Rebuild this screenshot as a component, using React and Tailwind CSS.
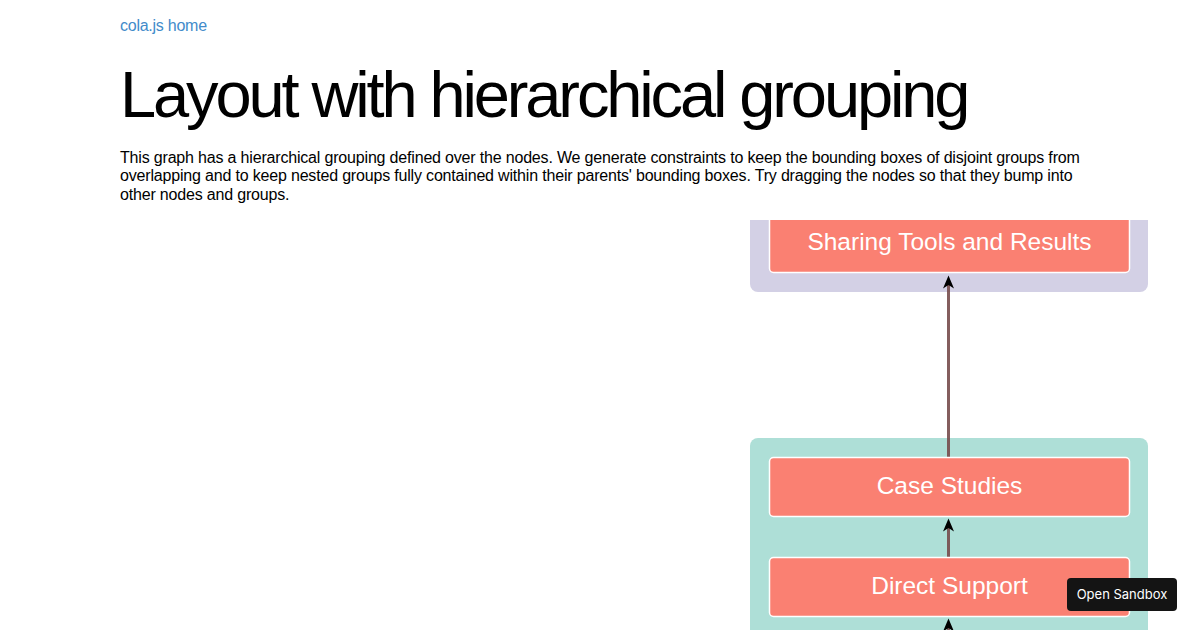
import React from 'react';

const font = { fontFamily: '"Liberation Sans", Arial, sans-serif' };

function Arrow({ x, y }) {
  // arrowhead pointing up, tip at (x, y)
  return <path d={`M${x} ${y} L${x + 5.5} ${y + 13} L${x} ${y + 9.5} L${x - 5.5} ${y + 13} Z`} fill="#000" />;
}

function Node({ x, y, w, h, label }) {
  return (
    <g>
      <rect x={x} y={y} width={w} height={h} rx={4} fill="#fa8072" stroke="#fff" strokeWidth={1.5} />
      <text x={x + w / 2} y={y + h / 2 + 7} textAnchor="middle" fill="#fff" fontSize={24.5} style={font}>
        {label}
      </text>
    </g>
  );
}

function Graph() {
  return (
    <svg width="1200" height="410" viewBox="0 220 1200 410" className="block">
      {/* groups */}
      <rect x={750} y={150} width={398} height={142} rx={8} fill="#d3d0e5" />
      <rect x={750} y={438} width={398} height={260} rx={8} fill="#aedfd7" />

      {/* edges */}
      <line x1={948.5} y1={282} x2={948.5} y2={458} stroke="#774d4d" strokeOpacity={0.9} strokeWidth={3} />
      <line x1={948.5} y1={524} x2={948.5} y2={558} stroke="#774d4d" strokeOpacity={0.9} strokeWidth={3} />
      <line x1={948.5} y1={624} x2={948.5} y2={660} stroke="#774d4d" strokeOpacity={0.9} strokeWidth={3} />

      {/* nodes */}
      <Node x={769.5} y={213} w={360} h={59.5} label="Sharing Tools and Results" />
      <Node x={769.5} y={457.5} w={360} h={59} label="Case Studies" />
      <Node x={769.5} y={557.5} w={360} h={59} label="Direct Support" />

      <Arrow x={948.5} y={275.5} />
      <Arrow x={948.5} y={518.5} />
      <Arrow x={948.5} y={618.5} />
    </svg>
  );
}

export default function App() {
  return (
    <div className="relative w-[1200px] h-[630px] overflow-hidden bg-white text-black" style={font}>
      <div className="w-[960px] mx-auto pt-[14px]">
        <div className="leading-[24px]">
          <a href="#" className="text-[16px] tracking-[-0.25px] text-[#428bca]">cola.js home</a>
        </div>
        <h1 className="mt-[21px] text-[65px] leading-[72px] tracking-[-0.048em] font-normal">
          Layout with hierarchical grouping
        </h1>
        <p className="mt-[18px] text-[16px] leading-[18.4px] tracking-[-0.18px]">
          This graph has a hierarchical grouping defined over the nodes. We generate constraints to keep the bounding
          boxes of disjoint groups from overlapping and to keep nested groups fully contained within their parents'
          bounding boxes. Try dragging the nodes so that they bump into other nodes and groups.
        </p>
      </div>
      <div className="mt-[16px]">
        <Graph />
      </div>
      <button className="absolute left-[1067px] top-[578px] w-[110px] h-[33px] rounded-[4px] bg-[#141414] text-white text-[13px] flex items-center justify-center" style={{ fontFamily: 'Inter, "Liberation Sans", sans-serif' }}>
        Open Sandbox
      </button>
    </div>
  );
}
